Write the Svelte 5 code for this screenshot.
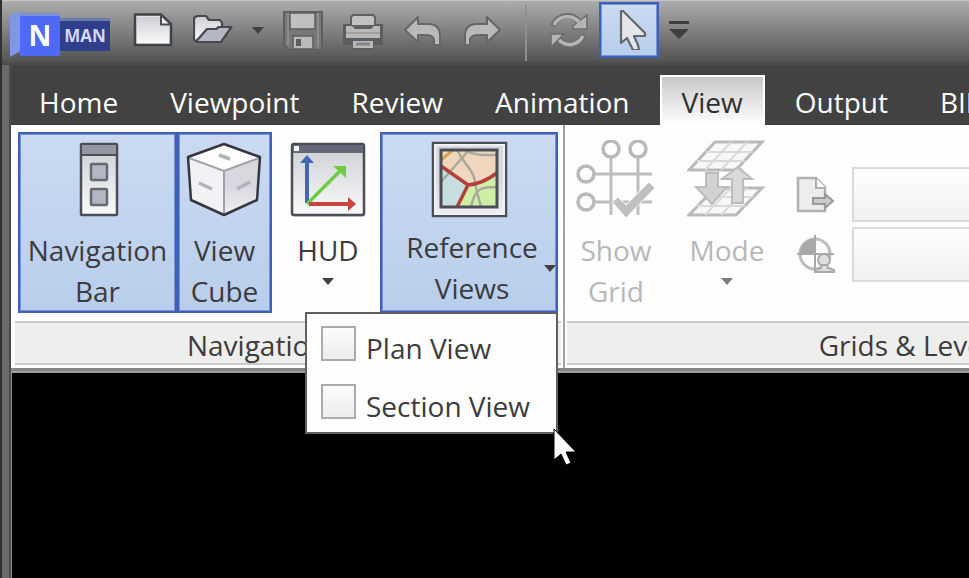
<script lang="ts">
    const tabs = ['Home', 'Viewpoint', 'Review', 'Animation', 'View', 'Output', 'BIM 360'];

    let activeTab = $state('View');
    let navBar = $state(true);
    let viewCube = $state(true);
    let refOpen = $state(true);
    let planView = $state(false);
    let sectionView = $state(false);
</script>

<div class="window">
    <header class="titlebar">
        <div class="logo">
            <span class="logo-side"></span>
            <span class="logo-n">N</span>
            <span class="logo-man">MAN</span>
        </div>
        <div class="quick">
            <button class="tool" aria-label="New">
                <svg viewBox="0 0 40 40">
                    <path d="M2 4.500H28L38 14V35H2Z" fill="#e3e5e9" stroke="#3f4246" stroke-width="2.500" stroke-linejoin="round" />
                    <path d="M4 7H27V15H36V33H4Z" fill="url(#paper)" />
                    <path d="M28 5V14.500H38Z" fill="#f4f4f5" stroke="#4a4d51" stroke-width="2" stroke-linejoin="round" />
                </svg>
            </button>
            <button class="tool" aria-label="Open">
                <svg viewBox="0 0 40 40">
                    <path d="M1 30V8L4 6H13L16 10H27L29 13V20L9 31H4Z" fill="url(#paper)" stroke="#45484d" stroke-width="2.200" stroke-linejoin="round" />
                    <path d="M3 31.500L14 19H23L26 17H38.500L28 32H4Z" fill="#b3b8c3" stroke="#45484d" stroke-width="2.200" stroke-linejoin="round" />
                </svg>
            </button>
            <button class="tool narrow" aria-label="Open options"><span class="caret"></span></button>
            <button class="tool" aria-label="Save" disabled>
                <svg viewBox="0 0 40 40">
                    <path d="M1 2H39V40H6L1 35Z" fill="#777" stroke="#606060" stroke-width="2" />
                    <rect x="4" y="3" width="2" height="32" fill="#8d8d8d" />
                    <rect x="34" y="3" width="2" height="34" fill="#8d8d8d" />
                    <rect x="7" y="3" width="25" height="16" fill="#c0c0c0" stroke="#5d5d5d" stroke-width="1.500" />
                    <rect x="10" y="26" width="20" height="13" fill="#b9b9b9" stroke="#5d5d5d" stroke-width="1.500" />
                    <rect x="13" y="29" width="5" height="7" fill="#5c5c5c" />
                </svg>
            </button>
            <button class="tool" aria-label="Print" disabled>
                <svg viewBox="0 0 40 40">
                    <path d="M0 14H40V35H31V40H9V35H0Z" fill="#5d5d5d" />
                    <path d="M10 5H30L32 7V16H8V7Z" fill="#c1c1c1" stroke="#606060" stroke-width="2" />
                    <path d="M3 16H9L12 19H28L31 16H37V28H3Z" fill="#b9b9b9" />
                    <rect x="3" y="22" width="34" height="2" fill="#a59f9b" />
                    <path d="M10 31H30V38H10Z" fill="#b9b9b9" />
                    <path d="M13 34H27" stroke="#858585" stroke-width="3" />
                </svg>
            </button>
            <button class="tool" aria-label="Undo" disabled>
                <svg viewBox="0 0 40 40">
                    <path d="M2 20L15 7V14H27C34 15 37 19 37 25V35H31V29C30 26 27 25 23 25H15V32Z" fill="#b9b9b9" stroke="#666" stroke-width="2" stroke-linejoin="round" />
                </svg>
            </button>
            <button class="tool" aria-label="Redo" disabled>
                <svg viewBox="0 0 40 40">
                    <path d="M37 20L24 7V14H12C5 15 2 19 2 25V35H7V29C8 26 11 25 15 25H24V32Z" fill="#b9b9b9" stroke="#666" stroke-width="2" stroke-linejoin="round" />
                </svg>
            </button>
            <span class="divider"></span>
            <button class="tool" aria-label="Refresh" disabled>
                <svg viewBox="0 0 40 40" fill="none">
                    <path d="M4 16C9 4 24 3 30 12M35 25C29 37 16 38 10 30" stroke="#6c6c6c" stroke-width="6" />
                    <path d="M24 16L38 5V19H24Z M15 24H2V37Z" fill="#b5b5b5" stroke="#6c6c6c" stroke-width="1.500" />
                    <path d="M5 15C10 5 23 4 30 12M34 26C29 36 17 37 10 30" stroke="#b5b5b5" stroke-width="3.500" />
                </svg>
            </button>
            <button class="tool selected" aria-label="Select">
                <svg viewBox="0 0 40 40">
                    <path d="M12 1V33L18 28L24 40H30L29 35L25 26H36V23L14 1Z" fill="#e4e6ea" stroke="#64676d" stroke-width="2.200" stroke-linejoin="round" />
                </svg>
            </button>
            <button class="tool more" aria-label="Customize toolbar">
                <svg viewBox="0 0 40 40">
                    <path d="M10 11H30V14H10ZM10 19H30L20 29Z" fill="#3d3f3f" />
                </svg>
            </button>
        </div>
    </header>

    <div class="body">
        <div class="frame"></div>
        <main>
            <nav class="tabs">
                {#each tabs as tab}
                    <button class="tab" class:active={tab === activeTab} onclick={() => (activeTab = tab)}>{tab}</button>
                {/each}
            </nav>

            <div class="ribbon">
                <section class="panel">
                    <div class="items">
                        <button class="item wide" class:on={navBar} onclick={() => (navBar = !navBar)}>
                            <svg viewBox="0 0 80 80">
                                <rect x="23" y="4" width="36" height="71" rx="1" fill="url(#paper)" stroke="#4b4e57" stroke-width="2.500" />
                                <rect x="24" y="5" width="34" height="10" fill="#9597a4" />
                                <path d="M23 15H59" stroke="#4b4e57" stroke-width="2" />
                                <rect x="33" y="24" width="16" height="16" rx="1" fill="#b4b6c2" stroke="#666973" stroke-width="2.500" />
                                <rect x="33" y="49" width="16" height="16" rx="1" fill="#b4b6c2" stroke="#666973" stroke-width="2.500" />
                            </svg>
                            <span>Navigation<br />Bar</span>
                        </button>
                        <button class="item cube" class:on={viewCube} onclick={() => (viewCube = !viewCube)}>
                            <svg viewBox="1 0 80 80">
                                <path d="M4 17L40 30V75L7 60Z" fill="#f1f2f4" />
                                <path d="M76 17L40 30V75L73 60Z" fill="url(#side)" />
                                <path d="M40 4L76 17L40 31L4 17Z" fill="#fdfdfd" />
                                <path d="M5 18L40 31L75 18M40 31V74" fill="none" stroke="#a0a2ab" stroke-width="2" />
                                <path d="M40 4L76 17L73 60L40 75L7 60L4 17Z" fill="none" stroke="#35373d" stroke-width="2.500" stroke-linejoin="round" />
                                <path d="M35 15L46 19M15 43L28 49M53 49L66 42" stroke="#b1b2bb" stroke-width="3.500" />
                            </svg>
                            <span>View<br />Cube</span>
                        </button>
                        <button class="item hud">
                            <svg viewBox="0 0 80 80">
                                <rect x="4" y="5" width="73" height="72" rx="2" fill="#d9d9dc" />
                                <rect x="4" y="4" width="72" height="71" rx="2" fill="url(#paper)" stroke="#4b4e57" stroke-width="2.500" />
                                <rect x="5" y="5" width="70" height="8" fill="#626876" />
                                <rect x="6" y="6" width="5" height="5" fill="#fff" />
                                <path d="M19 63V21" stroke="#4167b5" stroke-width="4" />
                                <path d="M12 23L19 15L26 23Z" fill="#4167b5" />
                                <path d="M19 64L52 31" stroke="#6ecb43" stroke-width="3.500" />
                                <path d="M45 26H58V38Z" fill="#6ecb43" />
                                <path d="M21 64H60" stroke="#c7453d" stroke-width="4" />
                                <path d="M60 57L68 64L60 71Z" fill="#c7453d" />
                            </svg>
                            <span>HUD</span>
                            <span class="caret"></span>
                        </button>
                        <div class="drop">
                            <button class="item ref on" aria-expanded={refOpen} onclick={() => (refOpen = !refOpen)}>
                                <svg viewBox="0 0 80 80">
                                    <rect x="4" y="3" width="73" height="73" fill="url(#side)" stroke="#4b4e57" stroke-width="2.500" />
                                    <path d="M6 5H75V74H6Z" fill="none" stroke="#f2f2f4" stroke-width="2" />
                                    <rect x="12" y="10" width="56" height="57" fill="#efd6bc" />
                                    <path d="M12 26L39 45L28 67H12Z" fill="#c8dfe1" />
                                    <path d="M39 45C50 44 60 39 68 33V67H28Z" fill="#cfefa5" />
                                    <path d="M12 20L24 10" stroke="#d5a54b" stroke-width="3" />
                                    <path d="M12 42L40 10M28 10C38 29 45 28 47 48L52 67M42 67C46 47 53 47 68 47M36 10C46 16 55 15 68 15" fill="none" stroke="#aaa99d" stroke-width="2.500" />
                                    <path d="M12 26L39 45C50 44 60 39 68 33M39 45L28 67" fill="none" stroke="#b43f3a" stroke-width="3.500" />
                                    <rect x="12" y="10" width="56" height="57" fill="none" stroke="#4b4e57" stroke-width="3" />
                                </svg>
                                <span class="split">
                                    <span>Reference<br />Views</span>
                                    <span class="caret"></span>
                                </span>
                            </button>
                            {#if refOpen}
                                <div class="menu">
                                    <label><input type="checkbox" bind:checked={planView} /> <span>Plan View</span></label>
                                    <label><input type="checkbox" bind:checked={sectionView} /> <span>Section View</span></label>
                                    <svg class="pointer" viewBox="0 0 24 38">
                                        <path d="M1 1V32L8 26L13 37L18 35L13 24H23Z" fill="#fff" stroke="#000" stroke-width="1" />
                                    </svg>
                                </div>
                            {/if}
                        </div>
                    </div>
                    <h2>Navigation Aids</h2>
                </section>

                <section class="panel">
                    <div class="items">
                        <button class="item show" disabled>
                            <svg viewBox="0 0 80 80" fill="none">
                                <path d="M35 18V75M62 18V75M19 34H76M19 62H76" stroke="#bdbdbd" stroke-width="3" />
                                <g fill="#fff" stroke="#b9b9b9" stroke-width="3.500">
                                    <circle cx="35" cy="9" r="8" />
                                    <circle cx="62" cy="9" r="8" />
                                    <circle cx="10" cy="34" r="8" />
                                    <circle cx="10" cy="62" r="8" />
                                </g>
                                <path d="M36 62L42 57L50 65L73 42L79 48L50 78Z" fill="#c0c0c0" stroke="#fff" stroke-width="1" />
                            </svg>
                            <span>Show<br />Grid</span>
                        </button>
                        <button class="item mode" disabled>
                            <svg viewBox="2 0 80 80" fill="none">
                                <path d="M4 75L30 48H77L51 75Z" fill="#f8f8f8" stroke="#b9b9b9" stroke-width="3" />
                                <path d="M12 66H60M21 57H68M20 75L46 48M36 75L62 48" stroke="#dadada" stroke-width="2" />
                                <path d="M4 30L30 2H77L51 30Z" fill="#f8f8f8" stroke="#b9b9b9" stroke-width="3" />
                                <path d="M12 21H60M21 12H68M20 30L46 2M36 30L62 2" stroke="#dadada" stroke-width="2" />
                                <path d="M21 33H33V47H42L27 64L11 47H21Z" fill="#d2d2d2" stroke="#bcbcbc" stroke-width="2" />
                                <path d="M47 63H58V39H67L53 27L37 39H47Z" fill="#d9d9d9" stroke="#bcbcbc" stroke-width="2" />
                            </svg>
                            <span>Mode</span>
                            <span class="caret"></span>
                        </button>
                        <div class="fields">
                            <div class="field">
                                <svg viewBox="0 0 40 40">
                                    <path d="M2 3H20L29 12V36H2Z" fill="#ededed" stroke="#b0b0b0" stroke-width="2.500" />
                                    <path d="M20 3V13H30" fill="#fff" stroke="#b0b0b0" stroke-width="2" />
                                    <path d="M17 23H29V19L37 26L29 33V29H17Z" fill="#cacaca" stroke="#999" stroke-width="2" />
                                </svg>
                                <select aria-label="Grid file" disabled></select>
                            </div>
                            <div class="field">
                                <svg viewBox="0 0 40 40" fill="none">
                                    <circle cx="19" cy="19" r="15" stroke="#bdbdbd" stroke-width="3" />
                                    <path d="M19 19H4A15 15 0 0 1 19 4Z" fill="#a9a9a9" stroke="#a9a9a9" />
                                    <path d="M19 0V37M1 19H38" stroke="#a9a9a9" stroke-width="2" />
                                    <circle cx="28" cy="25" r="6" fill="#dedede" stroke="#a9a9a9" stroke-width="2" />
                                    <path d="M25 30H31L32 33L38 35V37H19V35L25 33Z" fill="#dedede" stroke="#a9a9a9" stroke-width="2" />
                                </svg>
                                <select aria-label="Grid level" disabled></select>
                            </div>
                        </div>
                    </div>
                    <h2>Grids &amp; Levels</h2>
                </section>
            </div>
            <div class="scene"></div>
        </main>
    </div>

    <!-- shared gradients -->
    <svg class="defs" aria-hidden="true">
        <linearGradient id="paper" x2="0" y2="1">
            <stop offset="0" stop-color="#cdcfd4" />
            <stop offset="1" stop-color="#fafafa" />
        </linearGradient>
        <linearGradient id="side" x2="0" y2="1">
            <stop offset="0" stop-color="#d8d9de" />
            <stop offset="0.500" stop-color="#d8d9de" />
            <stop offset="1" stop-color="#f0f0f3" />
        </linearGradient>
    </svg>
</div>

<style>
:global(body) {
    margin: 0;
    background: #000;
}
.window {
    display: flex;
    flex-direction: column;
    box-sizing: border-box;
    height: 100vh;
    overflow: hidden;
    border-left: 2px solid #303030;
    font-family: "Open Sans", "Noto Sans", sans-serif;
    font-size: 28px;
    line-height: 41px;
    color: #3c3c3c;
}
button {
    padding: 0;
    border: 0;
    background: none;
    font: inherit;
    color: inherit;
    flex: none;
}
svg {
    display: block;
}
.titlebar {
    display: flex;
    flex: none;
    box-sizing: border-box;
    height: 65px;
    padding: 1px 8px;
    background: linear-gradient(#acacac, #535353);
    border-top: 1px solid #c4c4c0;
    border-bottom: 3px solid #4c4c4c;
}
.logo {
    display: flex;
    align-items: center;
    height: 64px;
    width: 113px;
    font-weight: bold;
    color: #fff;
}
.logo-side {
    width: 10px;
    height: 46px;
    background: #7e99e2;
    clip-path: polygon(0 10%, 100% 0, 100% 88%, 0 100%);
}
.logo-n {
    width: 40px;
    height: 40px;
    line-height: 38px;
    text-align: center;
    background: #4e69f5;
    border-top: 3px solid #7d8fd0;
}
.logo-man {
    width: 50px;
    height: 30px;
    line-height: 30px;
    font-size: 17px;
    text-align: center;
    color: #d3d7ef;
    background: #303f8c;
    border-top: 3px solid #6b7cae;
}
.quick {
    display: flex;
}
.tool {
    box-sizing: border-box;
    display: flex;
    align-items: center;
    justify-content: center;
    width: 60px;
    height: 56px;
}
.tool svg, .field svg {
    width: 40px;
    height: 40px;
    flex: none;
}
.tool.narrow {
    width: 30px;
}
.tool.more {
    width: 40px;
}
.selected, .on {
    border: 2px solid #3f60b8;
    background: linear-gradient(#cbdaf1, #b8ceec);
    box-shadow: inset 0 0 0 1px #7593d2;
}
.divider {
    width: 2px;
    margin: 3px 12px 0;
    background: #8f8f8f;
}
.caret {
    width: 0;
    height: 0;
    border: 6px solid transparent;
    border-top: 7px solid #3f4040;
    border-bottom: 0;
}
.body {
    display: flex;
    flex: 1;
    min-height: 0;
}
.frame {
    flex: none;
    width: 7px;
    background: #6a6a6a;
}
main {
    display: flex;
    flex-direction: column;
    flex: 1;
    min-width: 0;
    border-left: 2px solid #4b4b4b;
}
.tabs {
    display: flex;
    flex: none;
    gap: 8px;
    box-sizing: border-box;
    height: 60px;
    padding: 10px 0 0 6px;
    background: #424242;
    color: #fff;
}
.tab {
    box-sizing: border-box;
    height: 50px;
    padding: 4px 22px 0;
    white-space: nowrap;
}
.tab.active {
    padding: 2px 20px 0;
    border: 2px solid #fff;
    border-bottom: 0;
    background: linear-gradient(#c8c8c8, #fff);
    color: #2f2f2f;
}
.ribbon {
    display: flex;
    flex: none;
    background: #fefefe;
    border-bottom: 3px solid #858585;
    box-shadow: 0 2px #a0a0a0;
}
.panel {
    flex: none;
    padding: 7px 2px 3px;
    border-right: 2px solid #a3a3a3;
}
.panel:first-child {
    padding-left: 4px;
}
.items {
    display: flex;
    padding: 0 3px;
}
.item {
    box-sizing: border-box;
    display: flex;
    flex-direction: column;
    align-items: center;
    height: 181px;
    padding: 8px 0 0;
}
.item.on {
    padding-top: 6px;
}
.item svg {
    width: 80px;
    height: 80px;
    flex: none;
}
.item span {
    margin-top: 10px;
}
.item .caret {
    margin-top: 7px;
}
.wide {
    width: 159px;
}
.cube {
    width: 95px;
}
.hud {
    width: 104px;
    margin: 0 0 0 4px;
}
.drop {
    position: relative;
}
.ref {
    width: 178px;
}
.item .split {
    display: flex;
    align-items: center;
    gap: 6px;
    margin-top: 7px;
    padding-left: 24px;
}
.item .split span {
    margin-top: 0;
}
.menu {
    position: absolute;
    z-index: 1;
    top: 180px;
    right: 0;
    box-sizing: border-box;
    width: 253px;
    padding: 0 0 2px;
    border: 2px solid #606060;
    background: #fefefe;
}
.menu label {
    display: flex;
    align-items: center;
    gap: 10px;
    height: 58px;
    padding-left: 14px;
    white-space: nowrap;
}
.menu label span {
    padding-top: 10px;
}
.menu input {
    appearance: none;
    box-sizing: border-box;
    width: 35px;
    height: 35px;
    margin: 0;
    border: 2px solid #ababab;
    background: linear-gradient(#fdfdfd, #ececec);
}
.menu input:checked {
    background: #4167b5;
}
.pointer {
    position: absolute;
    right: -21px;
    bottom: -34px;
    width: 24px;
    height: 38px;
}
h2 {
    box-sizing: border-box;
    height: 44px;
    margin: 8px 0 0;
    border: solid #cbcbcb;
    border-width: 2px 0;
    background: #eeeeec;
    font: inherit;
    line-height: 44px;
    text-align: center;
}
.show {
    width: 92px;
}
.mode {
    width: 110px;
    margin-left: 10px;
}
.item:disabled {
    color: #b7b7b7;
}
.item:disabled .caret {
    border-top-color: #7b7b7b;
}
.fields {
    display: flex;
    flex-direction: column;
    gap: 5px;
    padding: 35px 0 0 14px;
}
.field {
    display: flex;
    align-items: center;
    gap: 16px;
}
.field select {
    appearance: none;
    box-sizing: border-box;
    width: 400px;
    height: 55px;
    border: 2px solid #dadada;
    border-radius: 0;
    background: linear-gradient(#fefefe, #f1f1f1);
    opacity: 1;
}
.scene {
    flex: 1;
    border-left: 1px solid #8f8f8f;
    background: #000;
    margin-top: 2px;
}
.defs {
    position: absolute;
    width: 0;
    height: 0;
}
</style>
